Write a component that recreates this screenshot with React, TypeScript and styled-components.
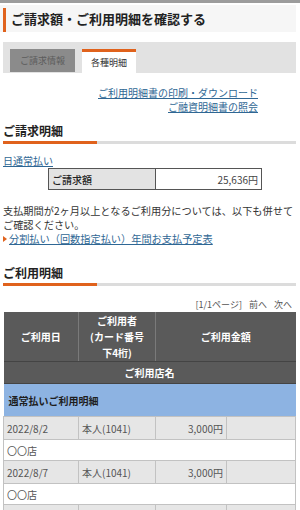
import styled, { createGlobalStyle } from "styled-components";

const GlobalStyle = createGlobalStyle`
  body {
    margin: 0;
    background: #fff;
    font-family: "Noto Sans CJK JP", "Noto Sans", sans-serif;
    color: #333;
  }
`;

const ORANGE = "#e0621c";
const LINK = "#2f6794";

const S = {
  Page: styled.div`
    width: 300px;
    border-top: 3px solid #9c9c9c;
    padding: 0 4px 0 3px;
    box-sizing: border-box;
  `,
  TitleBar: styled.div`
    margin: 2px 0 0 -3px;
    padding: 3px 0 0 3px;
    background: #f6f6f6;
  `,
  Title: styled.h1`
    margin: 0;
    height: 24px;
    line-height: 22px;
    border-left: 3px solid ${ORANGE};
    padding-left: 5px;
    font-size: 13px;
    font-weight: bold;
    color: #222;
  `,
  Tabs: styled.div`
    margin-top: 10px;
    height: 31px;
    box-sizing: border-box;
    padding: 0 7px;
    background: #e2e2e2;
    display: flex;
    align-items: flex-end;
    gap: 7px;
  `,
  Tab: styled.div<{ $active?: boolean }>`
    height: ${(p) => (p.$active ? "21px" : "23px")};
    padding: 0 ${(p) => (p.$active ? "9px" : "10px")};
    display: flex;
    align-items: center;
    font-size: 9px;
    background: ${(p) => (p.$active ? "#fff" : "#8b8b8b")};
    color: ${(p) => (p.$active ? "#333" : "#5c5c5c")};
    border-top: ${(p) => (p.$active ? `3px solid ${ORANGE}` : "none")};
    margin-bottom: ${(p) => (p.$active ? "0" : "1px")};
  `,
  LinkBox: styled.div`
    margin-top: 13px;
    padding-right: 38px;
    display: flex;
    flex-direction: column;
    align-items: flex-end;
  `,
  Link: styled.a`
    font-size: 10px;
    line-height: 14px;
    color: ${LINK};
    text-decoration: underline;
  `,
  Heading: styled.h2<{ $gap: number }>`
    margin: ${(p) => p.$gap}px 0 0;
    font-size: 12px;
    line-height: 14px;
    font-weight: bold;
    color: #222;
  `,
  HeadBar: styled.div`
    margin-top: 3px;
    height: 3px;
    background: linear-gradient(to right, ${ORANGE} 94px, #dcdcdc 94px);
  `,
  PlainLink: styled.a`
    display: block;
    margin-top: 10px;
    font-size: 10px;
    line-height: 14px;
    color: ${LINK};
    text-decoration: underline;
  `,
  TotalTable: styled.table`
    margin: 0 0 0 45px;
    width: 214px;
    border-collapse: collapse;
    font-size: 10px;
  `,
  TotalLabel: styled.td`
    width: 50%;
    height: 20px;
    padding: 0 3px;
    border: 1px solid #555;
    background: #e3e3e3;
    color: #222;
    font-weight: 500;
  `,
  TotalValue: styled.td`
    padding: 0 3px;
    border: 1px solid #555;
    text-align: right;
    color: #444;
  `,
  Note: styled.p`
    margin: 14px 0 0;
    font-size: 10.2px;
    line-height: 14px;
    color: #333;
  `,
  ArrowLink: styled.a`
    display: flex;
    align-items: center;
    gap: 2px;
    font-size: 10.2px;
    line-height: 14px;
    color: ${LINK};
    text-decoration: underline;
    &::before {
      content: "";
      border-left: 4px solid ${ORANGE};
      border-top: 3px solid transparent;
      border-bottom: 3px solid transparent;
    }
  `,
  Pager: styled.div`
    margin-top: 12px;
    padding-right: 4px;
    display: flex;
    justify-content: flex-end;
    gap: 7px;
    font-size: 9px;
    line-height: 13px;
    color: #555;
  `,
  Grid: styled.table`
    margin-top: 1px;
    width: 293px;
    border-collapse: collapse;
    table-layout: fixed;
    font-size: 10px;
  `,
  HeadCell: styled.th<{ $tall?: boolean }>`
    height: ${(p) => (p.$tall ? "49px" : "21px")};
    padding: 0;
    background: #5a5a5a;
    color: #fff;
    font-weight: bold;
    line-height: 16px;
    text-align: center;
    border-left: 1px solid #7a7a7a;
    border-bottom: 1px solid #444;
    &:first-child {
      border-left: none;
    }
  `,
  GroupCell: styled.td`
    height: 32px;
    padding: 0 0 0 5px;
    background: #8db3e2;
    color: #1e1e1e;
    font-weight: bold;
  `,
  Cell: styled.td<{ $shade?: boolean; $right?: boolean }>`
    height: ${(p) => (p.$shade ? "22px" : "20px")};
    padding: 0 3px;
    background: ${(p) => (p.$shade ? "#e6e6e6" : "#fff")};
    color: #555;
    text-align: ${(p) => (p.$right ? "right" : "left")};
    border: 1px solid #c2c2c2;
    white-space: nowrap;
  `,
};

const rows = [
  { date: "2022/8/2", user: "本人(1041)", amount: "3,000円", shop: "〇〇店" },
  { date: "2022/8/7", user: "本人(1041)", amount: "3,000円", shop: "〇〇店" },
  { date: "2022/8/9", user: "本人(1041)", amount: "3,000円", shop: "〇〇店" },
];

function App() {
  return (
    <>
      <GlobalStyle />
      <S.Page>
        <S.TitleBar>
          <S.Title>ご請求額・ご利用明細を確認する</S.Title>
        </S.TitleBar>
        <S.Tabs>
          <S.Tab>ご請求情報</S.Tab>
          <S.Tab $active>各種明細</S.Tab>
        </S.Tabs>
        <S.LinkBox>
          <S.Link>ご利用明細書の印刷・ダウンロード</S.Link>
          <S.Link>ご融資明細書の照会</S.Link>
        </S.LinkBox>

        <S.Heading $gap={10}>ご請求明細</S.Heading>
        <S.HeadBar />
        <S.PlainLink>日通常払い</S.PlainLink>
        <S.TotalTable>
          <tbody>
            <tr>
              <S.TotalLabel>ご請求額</S.TotalLabel>
              <S.TotalValue>25,636円</S.TotalValue>
            </tr>
          </tbody>
        </S.TotalTable>
        <S.Note>
          支払期間が2ヶ月以上となるご利用分については、以下も併せてご確認ください。
        </S.Note>
        <S.ArrowLink>分割払い（回数指定払い）年間お支払予定表</S.ArrowLink>

        <S.Heading $gap={20}>ご利用明細</S.Heading>
        <S.HeadBar />
        <S.Pager>
          <span>[1/1ページ]</span>
          <span>前へ</span>
          <span>次へ</span>
        </S.Pager>
        <S.Grid>
          <colgroup>
            <col style={{ width: 75 }} />
            <col style={{ width: 77 }} />
            <col style={{ width: 71 }} />
            <col />
          </colgroup>
          <thead>
            <tr>
              <S.HeadCell $tall>ご利用日</S.HeadCell>
              <S.HeadCell $tall>
                ご利用者
                <br />
                (カード番号
                <br />
                下4桁)
              </S.HeadCell>
              <S.HeadCell $tall colSpan={2}>
                ご利用金額
              </S.HeadCell>
            </tr>
            <tr>
              <S.HeadCell colSpan={4}>ご利用店名</S.HeadCell>
            </tr>
          </thead>
          <tbody>
            <tr>
              <S.GroupCell colSpan={4}>通常払いご利用明細</S.GroupCell>
            </tr>
            {rows.map((row, index) => (
              <>
                <tr key={"d" + index}>
                  <S.Cell $shade>{row.date}</S.Cell>
                  <S.Cell $shade>{row.user}</S.Cell>
                  <S.Cell $shade $right>
                    {row.amount}
                  </S.Cell>
                  <S.Cell $shade />
                </tr>
                <tr key={"s" + index}>
                  <S.Cell colSpan={4}>{row.shop}</S.Cell>
                </tr>
              </>
            ))}
          </tbody>
        </S.Grid>
      </S.Page>
    </>
  );
}

export default App;
